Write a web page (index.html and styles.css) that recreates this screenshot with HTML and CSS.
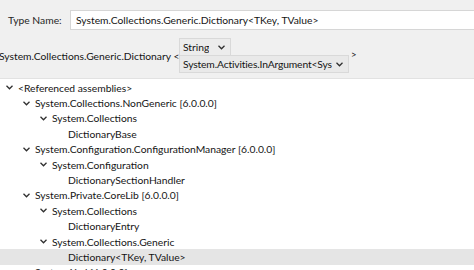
FILE: index.html
```html
<!DOCTYPE html>
<html>

<head>
    <meta charset="UTF-8">
    <title>Type Browser</title>
    <link rel="stylesheet" href="styles.css">
</head>

<body>
    <div id="typeHeader">
        <div class="nameRow">
            <label for="typeName">Type Name:</label>
            <input id="typeName" type="text" value="System.Collections.Generic.Dictionary<TKey, TValue>">
        </div>
        <div class="genericRow">
            <span class="genericName">System.Collections.Generic.Dictionary &lt;</span>
            <div class="argStack">
                <div class="combo short">
                    <span class="comboText">String</span>
                    <svg class="chevron" width="7" height="5" viewBox="0 0 7 5"><path d="M0.5 0.8 L3.5 3.8 L6.5 0.8" /></svg>
                </div>
                <div class="combo long">
                    <span class="comboText">System.Activities.InArgument&lt;Sys</span>
                    <svg class="chevron" width="7" height="5" viewBox="0 0 7 5"><path d="M0.5 0.8 L3.5 3.8 L6.5 0.8" /></svg>
                </div>
            </div>
            <span class="genericClose">&gt;</span>
        </div>
    </div>
    <div id="typeTree">
        <div class="treeRow lvl0"><svg class="expander" width="7" height="5" viewBox="0 0 7 5"><path d="M0.5 0.8 L3.5 3.8 L6.5 0.8" /></svg>&lt;Referenced assemblies&gt;</div>
        <div class="treeRow lvl1"><svg class="expander" width="7" height="5" viewBox="0 0 7 5"><path d="M0.5 0.8 L3.5 3.8 L6.5 0.8" /></svg>System.Collections.NonGeneric [6.0.0.0]</div>
        <div class="treeRow lvl2"><svg class="expander" width="7" height="5" viewBox="0 0 7 5"><path d="M0.5 0.8 L3.5 3.8 L6.5 0.8" /></svg>System.Collections</div>
        <div class="treeRow lvl3">DictionaryBase</div>
        <div class="treeRow lvl1"><svg class="expander" width="7" height="5" viewBox="0 0 7 5"><path d="M0.5 0.8 L3.5 3.8 L6.5 0.8" /></svg>System.Configuration.ConfigurationManager [6.0.0.0]</div>
        <div class="treeRow lvl2"><svg class="expander" width="7" height="5" viewBox="0 0 7 5"><path d="M0.5 0.8 L3.5 3.8 L6.5 0.8" /></svg>System.Configuration</div>
        <div class="treeRow lvl3">DictionarySectionHandler</div>
        <div class="treeRow lvl1"><svg class="expander" width="7" height="5" viewBox="0 0 7 5"><path d="M0.5 0.8 L3.5 3.8 L6.5 0.8" /></svg>System.Private.CoreLib [6.0.0.0]</div>
        <div class="treeRow lvl2"><svg class="expander" width="7" height="5" viewBox="0 0 7 5"><path d="M0.5 0.8 L3.5 3.8 L6.5 0.8" /></svg>System.Collections</div>
        <div class="treeRow lvl3">DictionaryEntry</div>
        <div class="treeRow lvl2"><svg class="expander" width="7" height="5" viewBox="0 0 7 5"><path d="M0.5 0.8 L3.5 3.8 L6.5 0.8" /></svg>System.Collections.Generic</div>
        <div class="treeRow lvl3 selected">Dictionary&lt;TKey, TValue&gt;</div>
        <div class="treeRow lvl1"><svg class="expander" width="7" height="5" viewBox="0 0 7 5"><path d="M0.5 0.8 L3.5 3.8 L6.5 0.8" /></svg>System.Xml [6.0.0.0]</div>
    </div>
</body>

</html>
```

FILE: styles.css
```css
html {
    background: #ffffff;
    color: #141414;
    font-size: 10.3px;
    font-family: Lato, "Noto Sans", sans-serif;
}
body {
    margin: 0;
    overflow: hidden;
    height: 270px;
}
#typeHeader {
    background: #f0f0f0;
    border-bottom: 1px solid #e2e2e2;
    height: 79px;
    box-sizing: border-box;
    padding-top: 10px;
}
.nameRow {
    display: flex;
    align-items: center;
    height: 20px;
}
.nameRow > label {
    flex-shrink: 0;
    width: 62px;
    padding-left: 8px;
    color: #262626;
    white-space: nowrap;
}
.nameRow > input {
    flex: 1;
    min-width: 0;
    margin-right: -10px;
    height: 20px;
    box-sizing: border-box;
    border: 1px solid #d6d6d6;
    padding: 0 0 0 5px;
    font: inherit;
    color: #141414;
    outline: none;
}
.genericRow {
    display: flex;
    align-items: center;
    margin-top: 8px;
    margin-left: -1px;
    white-space: nowrap;
}
.genericName {
    flex-shrink: 0;
    width: 180px;
}
.argStack {
    flex-shrink: 0;
    display: flex;
    flex-direction: column;
}
.combo {
    display: flex;
    align-items: center;
    justify-content: space-between;
    height: 18px;
    box-sizing: border-box;
    border: 1px solid #d9d9d9;
    background: #ececec;
    padding: 0 5px 0 3px;
    overflow: hidden;
}
.comboText {
    overflow: hidden;
}
.chevron {
    flex-shrink: 0;
    margin-left: 3px;
}
.combo.short {
    width: 52px;
}
.combo.long {
    width: 170px;
    margin-top: -1px;
    background: #e9e9e9;
    letter-spacing: -0.15px;
}
.chevron path,
.expander path {
    fill: none;
    stroke: #2e2e2e;
    stroke-width: 1.25;
}
.genericClose {
    font-size: 9.5px;
    margin: -3px 0 0 2px;
}
#typeTree {
    padding-top: 1px;
}
.treeRow {
    display: flex;
    align-items: center;
    height: 15.4px;
    white-space: nowrap;
}
.expander {
    flex-shrink: 0;
    margin-right: 5px;
}
.treeRow.lvl0 {
    padding-left: 6px;
}
.treeRow.lvl1 {
    padding-left: 23px;
}
.treeRow.lvl2 {
    padding-left: 40px;
}
.treeRow.lvl3 {
    padding-left: 68px;
}
.treeRow.selected {
    background: #e5e5e5;
}
```
